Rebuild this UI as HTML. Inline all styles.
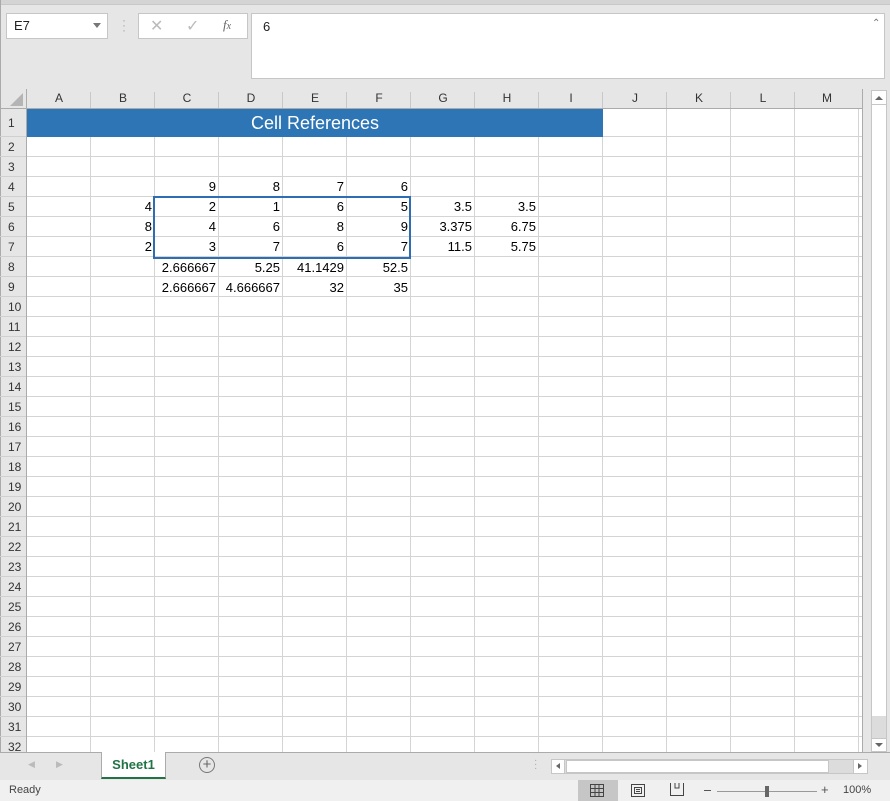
<!DOCTYPE html>
<html><head><meta charset="utf-8"><style>
*{margin:0;padding:0;box-sizing:border-box}
body{width:890px;height:801px;background:#e6e6e6;font-family:"Liberation Sans",sans-serif;position:relative;overflow:hidden}
.a{position:absolute}
.c{position:absolute;height:20px;line-height:20px;font-size:13px;color:#000;text-align:right;width:62px}
.rh{position:absolute;left:0;width:26px;height:20px;line-height:20px;font-size:12px;color:#333;padding-left:8px}
.ch{position:absolute;top:89px;height:19px;line-height:19px;width:64px;text-align:center;font-size:12px;color:#333}
</style></head><body>
<div class="a" style="left:0;top:0;width:890px;height:5px;background:#d4d4d4;border-bottom:1px solid #c8c8c8"></div>
<div class="a" style="left:0;top:0;width:1px;height:801px;background:#aaa"></div>
<div class="a" style="left:6px;top:13px;width:102px;height:26px;background:#fff;border:1px solid #c6c6c6;font-size:13px;line-height:24px;padding-left:7px;color:#222">E7</div>
<div class="a" style="left:93px;top:23px;width:0;height:0;border-left:4px solid transparent;border-right:4px solid transparent;border-top:5px solid #777"></div>
<div class="a" style="left:122px;top:18px;color:#aaa;font-size:12px;line-height:5px">·<br>·<br>·</div>
<div class="a" style="left:138px;top:13px;width:110px;height:26px;background:#fff;border:1px solid #c6c6c6"></div>
<div class="a" style="left:150px;top:16px;font-size:16px;color:#bbb">✕</div>
<div class="a" style="left:186px;top:16px;font-size:16px;color:#bbb">✓</div>
<div class="a" style="left:223px;top:17px;font-size:13px;color:#666;font-style:italic;font-family:'Liberation Serif',serif">f<span style="font-size:10px">x</span></div>
<div class="a" style="left:251px;top:13px;width:634px;height:66px;background:#fff;border:1px solid #c6c6c6;font-size:13px;padding:5px 11px;color:#222">6</div>
<div class="a" style="left:872px;top:18px;font-size:10px;color:#777">⌃</div>

<!-- header corner -->
<div class="a" style="left:10px;top:93px;width:0;height:0;border-left:13px solid transparent;border-bottom:13px solid #b4b4b4"></div>
<div class="a" style="left:0;top:108px;width:863px;height:1px;background:#ababab"></div>
<div class="a" style="left:26px;top:89px;width:1px;height:663px;background:#ababab"></div>
<!-- grid -->
<div class="a" style="left:27px;top:109px;width:836px;height:643px;background:#fff;
background-image:repeating-linear-gradient(to right,transparent 0,transparent 63px,#d4d4d4 63px,#d4d4d4 64px),repeating-linear-gradient(to bottom,transparent 0,transparent 27px,#d4d4d4 27px,#d4d4d4 28px);background-size:836px 643px,836px 28px;background-repeat:no-repeat,no-repeat"></div>
<div class="a" style="left:27px;top:137px;width:836px;height:615px;
background-image:repeating-linear-gradient(to right,transparent 0,transparent 63px,#d4d4d4 63px,#d4d4d4 64px),repeating-linear-gradient(to bottom,transparent 0,transparent 19px,#d4d4d4 19px,#d4d4d4 20px)"></div>
<div class="a" style="left:862px;top:89px;width:1px;height:663px;background:#ababab"></div>
<div class="a" style="left:27px;top:109px;width:576px;height:28px;background:#2e75b6;color:#fff;font-size:18px;line-height:28px;text-align:center">Cell References</div>

<div class="ch" style="left:27px">A</div><div class="ch" style="left:91px">B</div><div class="ch" style="left:155px">C</div><div class="ch" style="left:219px">D</div><div class="ch" style="left:283px">E</div><div class="ch" style="left:347px">F</div><div class="ch" style="left:411px">G</div><div class="ch" style="left:475px">H</div><div class="ch" style="left:539px">I</div><div class="ch" style="left:603px">J</div><div class="ch" style="left:667px">K</div><div class="ch" style="left:731px">L</div><div class="ch" style="left:795px">M</div>
<div class="a" style="left:90px;top:92px;width:705px;height:16px;background:repeating-linear-gradient(to right,#c8c8c8 0,#c8c8c8 1px,transparent 1px,transparent 64px)"></div>

<div class="rh" style="top:113px">1</div>
<div id="rows"></div>
<div class="rh" style="top:137px">2</div><div class="rh" style="top:157px">3</div><div class="rh" style="top:177px">4</div><div class="rh" style="top:197px">5</div><div class="rh" style="top:217px">6</div><div class="rh" style="top:237px">7</div><div class="rh" style="top:257px">8</div><div class="rh" style="top:277px">9</div><div class="rh" style="top:297px">10</div><div class="rh" style="top:317px">11</div><div class="rh" style="top:337px">12</div><div class="rh" style="top:357px">13</div><div class="rh" style="top:377px">14</div><div class="rh" style="top:397px">15</div><div class="rh" style="top:417px">16</div><div class="rh" style="top:437px">17</div><div class="rh" style="top:457px">18</div><div class="rh" style="top:477px">19</div><div class="rh" style="top:497px">20</div><div class="rh" style="top:517px">21</div><div class="rh" style="top:537px">22</div><div class="rh" style="top:557px">23</div><div class="rh" style="top:577px">24</div><div class="rh" style="top:597px">25</div><div class="rh" style="top:617px">26</div><div class="rh" style="top:637px">27</div><div class="rh" style="top:657px">28</div><div class="rh" style="top:677px">29</div><div class="rh" style="top:697px">30</div><div class="rh" style="top:717px">31</div><div class="rh" style="top:737px">32</div>
<div class="a" style="left:0;top:136px;width:26px;height:616px;background:repeating-linear-gradient(to bottom,#d0d0d0 0,#d0d0d0 1px,transparent 1px,transparent 20px)"></div>

<!-- data -->
<div class="c" style="left:154px;top:177px">9</div><div class="c" style="left:218px;top:177px">8</div><div class="c" style="left:282px;top:177px">7</div><div class="c" style="left:346px;top:177px">6</div>
<div class="c" style="left:90px;top:197px">4</div><div class="c" style="left:154px;top:197px">2</div><div class="c" style="left:218px;top:197px">1</div><div class="c" style="left:282px;top:197px">6</div><div class="c" style="left:346px;top:197px">5</div><div class="c" style="left:410px;top:197px">3.5</div><div class="c" style="left:474px;top:197px">3.5</div>
<div class="c" style="left:90px;top:217px">8</div><div class="c" style="left:154px;top:217px">4</div><div class="c" style="left:218px;top:217px">6</div><div class="c" style="left:282px;top:217px">8</div><div class="c" style="left:346px;top:217px">9</div><div class="c" style="left:410px;top:217px">3.375</div><div class="c" style="left:474px;top:217px">6.75</div>
<div class="c" style="left:90px;top:237px">2</div><div class="c" style="left:154px;top:237px">3</div><div class="c" style="left:218px;top:237px">7</div><div class="c" style="left:282px;top:237px">6</div><div class="c" style="left:346px;top:237px">7</div><div class="c" style="left:410px;top:237px">11.5</div><div class="c" style="left:474px;top:237px">5.75</div>
<div class="c" style="left:154px;top:258px">2.666667</div><div class="c" style="left:218px;top:258px">5.25</div><div class="c" style="left:282px;top:258px">41.1429</div><div class="c" style="left:346px;top:258px">52.5</div>
<div class="c" style="left:154px;top:278px">2.666667</div><div class="c" style="left:218px;top:278px">4.666667</div><div class="c" style="left:282px;top:278px">32</div><div class="c" style="left:346px;top:278px">35</div>
<div class="a" style="left:153px;top:196px;width:258px;height:63px;border:2px solid #2e6db4"></div>

<!-- vscroll -->
<div class="a" style="left:871px;top:90px;width:16px;height:662px;background:#fff;border:1px solid #c6c6c6"></div>
<div class="a" style="left:872px;top:91px;width:14px;height:14px;border-bottom:1px solid #c6c6c6"></div>
<div class="a" style="left:875px;top:96px;border-left:4px solid transparent;border-right:4px solid transparent;border-bottom:4px solid #666"></div>
<div class="a" style="left:872px;top:106px;width:14px;height:610px;background:#fff"></div>
<div class="a" style="left:872px;top:716px;width:14px;height:22px;background:#dcdcdc"></div>
<div class="a" style="left:872px;top:738px;width:14px;height:13px;border-top:1px solid #c6c6c6"></div>
<div class="a" style="left:875px;top:743px;border-left:4px solid transparent;border-right:4px solid transparent;border-top:4px solid #666"></div>

<!-- tab bar -->
<div class="a" style="left:0;top:752px;width:890px;height:28px;background:#e6e6e6;border-top:1px solid #ababab"></div>
<div class="a" style="left:28px;top:759px;font-size:9px;color:#bbb">◀</div>
<div class="a" style="left:56px;top:759px;font-size:9px;color:#bbb">▶</div>
<div class="a" style="left:101px;top:752px;width:65px;height:27px;background:#fff;border-left:1px solid #ababab;border-right:1px solid #ababab;border-bottom:2px solid #217346;color:#217346;font-weight:bold;font-size:13px;text-align:center;line-height:25px">Sheet1</div>
<div class="a" style="left:199px;top:757px;width:16px;height:16px;border:1px solid #777;border-radius:50%;color:#666;font-size:15px;line-height:13px;text-align:center">+</div>
<div class="a" style="left:534px;top:759px;color:#aaa;font-size:10px;line-height:4px">·<br>·<br>·</div>
<div class="a" style="left:551px;top:759px;width:317px;height:15px;background:#dcdcdc;border:1px solid #c6c6c6"></div>
<div class="a" style="left:552px;top:760px;width:13px;height:13px;background:#fff;border-right:1px solid #c6c6c6"></div>
<div class="a" style="left:556px;top:763px;border-top:3px solid transparent;border-bottom:3px solid transparent;border-right:4px solid #666"></div>
<div class="a" style="left:566px;top:760px;width:263px;height:13px;background:#fff;border:1px solid #c6c6c6"></div>
<div class="a" style="left:853px;top:760px;width:14px;height:13px;background:#fff;border-left:1px solid #c6c6c6"></div>
<div class="a" style="left:858px;top:763px;border-top:3px solid transparent;border-bottom:3px solid transparent;border-left:4px solid #666"></div>

<!-- status -->
<div class="a" style="left:0;top:780px;width:890px;height:21px;background:#f0f0f0;font-size:11px;color:#444;line-height:21px;padding-left:9px">Ready</div>
<div class="a" style="left:578px;top:780px;width:40px;height:21px;background:#c6c6c6"></div>
<svg class="a" style="left:590px;top:784px" width="14" height="13"><g fill="none" stroke="#444"><rect x=".5" y=".5" width="13" height="12"/><path d="M5 0v13M9 0v13M0 4.5h14M0 8.5h14"/></g></svg>
<svg class="a" style="left:631px;top:784px" width="14" height="13"><g fill="none" stroke="#444"><rect x=".5" y=".5" width="13" height="12"/><rect x="3.5" y="3.5" width="7" height="6"/><path d="M5 5.5h4M5 7.5h4"/></g></svg>
<svg class="a" style="left:670px;top:783px" width="14" height="13"><g fill="none" stroke="#444"><path d="M.5 0v12.5h13V0M5 0v5h4V0"/></g></svg>
<div class="a" style="left:704px;top:790px;width:7px;height:1px;background:#555"></div>
<div class="a" style="left:717px;top:791px;width:100px;height:1px;background:#999"></div>
<div class="a" style="left:765px;top:786px;width:4px;height:11px;background:#666"></div>
<div class="a" style="left:821px;top:783px;font-size:13px;color:#555;line-height:14px">+</div>
<div class="a" style="left:843px;top:780px;font-size:11px;color:#444;line-height:21px">100%</div>
</body></html>
